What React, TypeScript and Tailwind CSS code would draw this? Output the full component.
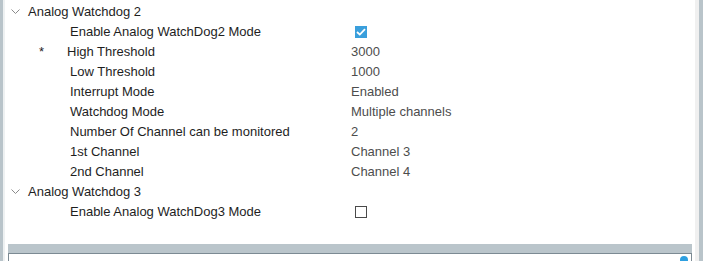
import React from 'react';

type Row = {
  label: string;
  value?: string;
  check?: boolean;
  star?: boolean;
};

const GROUPS: { title: string; rows: Row[] }[] = [
  {
    title: 'Analog Watchdog 2',
    rows: [
      { label: 'Enable Analog WatchDog2 Mode', check: true },
      { label: 'High Threshold', value: '3000', star: true },
      { label: 'Low Threshold', value: '1000' },
      { label: 'Interrupt Mode', value: 'Enabled' },
      { label: 'Watchdog Mode', value: 'Multiple channels' },
      { label: 'Number Of Channel can be monitored', value: '2' },
      { label: '1st Channel', value: 'Channel 3' },
      { label: '2nd Channel', value: 'Channel 4' },
    ],
  },
  {
    title: 'Analog Watchdog 3',
    rows: [{ label: 'Enable Analog WatchDog3 Mode', check: false }],
  },
];

function Chevron() {
  return (
    <svg width="9" height="6" viewBox="0 0 9 6" className="shrink-0">
      <polyline points="0.5,0.5 4.5,4.5 8.5,0.5" fill="none" stroke="#8a8a8a" strokeWidth="1" />
    </svg>
  );
}

function Checkbox({ checked }: { checked: boolean }) {
  if (checked) {
    return (
      <div className="w-[12px] h-[12px] bg-[#3a9fdc] flex items-center justify-center">
        <svg width="10" height="8" viewBox="0 0 10 8">
          <polyline points="1,4 3.8,6.6 9,1.2" fill="none" stroke="#fff" strokeWidth="1.8" />
        </svg>
      </div>
    );
  }
  return <div className="w-[12px] h-[12px] border border-[#4a4a4a] bg-white" />;
}

export default function App() {
  return (
    <div
      className="w-[703px] h-[261px] flex bg-white overflow-hidden"
      style={{ fontFamily: '"Liberation Sans", Arial, sans-serif' }}
    >
      <div className="w-[3px] bg-[#b9c4ca]" />
      <div className="w-[2px] bg-[#eef1f2]" />
      <div className="flex-1 flex flex-col">
        <div className="pt-[2px] h-[244px]">
          {GROUPS.map((g) => (
            <div key={g.title}>
              <div className="h-[20px] flex items-center text-[13px] text-[#1e1e1e]">
                <div className="w-[6px]" />
                <Chevron />
                <span className="ml-[8px]">{g.title}</span>
              </div>
              {g.rows.map((r) => (
                <div key={r.label} className="h-[20px] flex items-center text-[13px]">
                  <div className="w-[346px] flex items-center text-[#1e1e1e]">
                    {r.star ? (
                      <>
                        <span className="ml-[34px] w-[28px]">*</span>
                        <span>{r.label}</span>
                      </>
                    ) : (
                      <span className="ml-[65px]">{r.label}</span>
                    )}
                  </div>
                  {r.check !== undefined ? (
                    <div className="ml-[4px]">
                      <Checkbox checked={r.check} />
                    </div>
                  ) : (
                    <span className="text-[#4d4d4d]">{r.value}</span>
                  )}
                </div>
              ))}
            </div>
          ))}
        </div>
        <div className="ml-[3px] mr-[3px] h-[9px] bg-[#bac5cb]" />
        <div className="ml-[3px] mr-[3px] flex-1 border-t border-l border-r border-[#7c8a93] relative">
          <div className="absolute right-[3px] top-[2px] w-[8px] h-[8px] rounded-full bg-[#2d9fe0]" />
        </div>
      </div>
      <div className="w-[4px] bg-[#f0f0f0]" />
      <div className="w-[4px] bg-[#b9c4ca]" />
    </div>
  );
}
